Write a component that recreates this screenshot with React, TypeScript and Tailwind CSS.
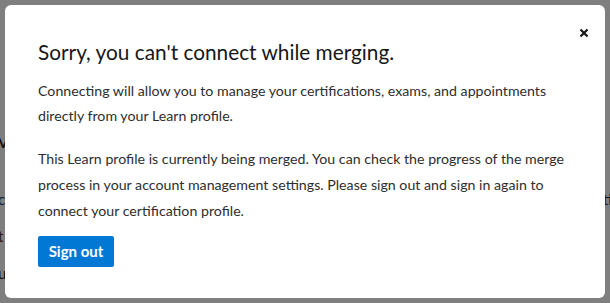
import React from 'react';

export default function App() {
  return (
    <div className="relative h-[303px] w-[610px] overflow-hidden bg-white">
      {/* page behind the dialog */}
      <div className="flex flex-col pt-[130px] text-[15px] leading-[20px] text-[#171717] font-['Lato',sans-serif]">
        <div className="-ml-[2px] text-[20px]">v</div>
        <div className="mt-[39px] flex justify-between -mx-[2px]">
          <span className="text-[#1b3f78]">c</span>
          <span className="text-[#3a1a40]">ti</span>
        </div>
        <div className="mt-[17px] -ml-[2px] text-[#6b2a16]">t</div>
        <div className="mt-[17px] -ml-[2px]">u</div>
      </div>

      {/* overlay */}
      <div className="absolute inset-0 bg-black/50" />

      {/* dialog */}
      <div className="absolute left-[5px] top-[5px] h-[293px] w-[600px] rounded-[6px] bg-white pl-[33px] pr-[36px] pt-[33px] font-['Lato',sans-serif] text-[#171717]">
        <button className="absolute right-[16px] top-[23px] leading-none">
          <svg width="10" height="10" viewBox="0 0 10 10">
            <path d="M1.5 1.5 L8.5 8.5 M8.5 1.5 L1.5 8.5" stroke="#171717" strokeWidth="2.2" />
          </svg>
        </button>
        <h2 className="text-[20.8px] leading-[28px] font-normal">Sorry, you can't connect while merging.</h2>
        <p className="mt-[12px] text-[14.2px] leading-[25px] text-[#2e2e2e]">
          Connecting will allow you to manage your certifications, exams, and appointments directly from your Learn profile.
        </p>
        <p className="mt-[18px] text-[14.2px] leading-[26px] text-[#2e2e2e]">
          This Learn profile is currently being merged. You can check the progress of the merge process in your account management settings. Please sign out and sign in again to connect your certification profile.
        </p>
        <button className="mt-[12px] h-[31px] w-[76px] rounded-[2px] bg-[#0078d4] text-[15px] font-bold text-white">
          Sign out
        </button>
      </div>
    </div>
  );
}
